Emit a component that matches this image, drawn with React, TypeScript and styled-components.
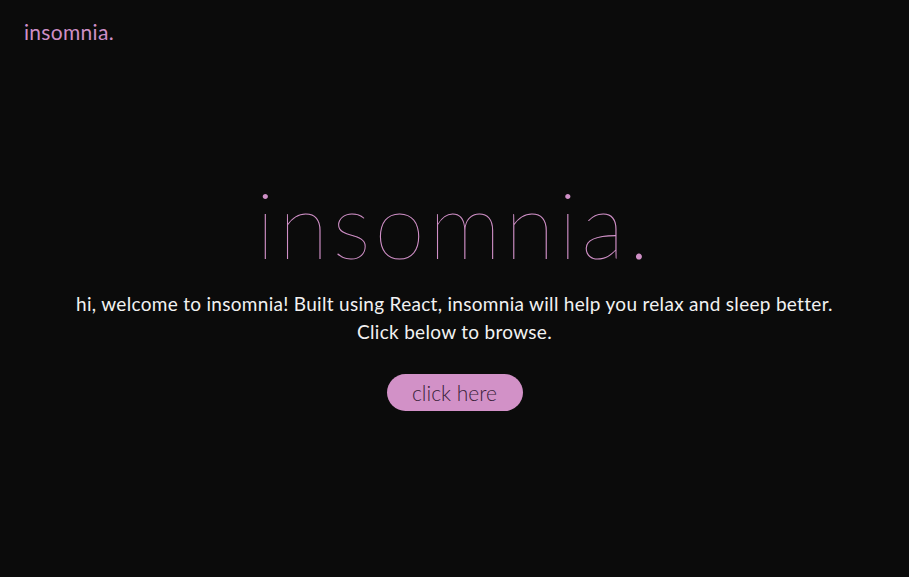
import React from 'react'
import styled, { createGlobalStyle } from 'styled-components'

const Global = createGlobalStyle`
  html, body {
    margin: 0;
    padding: 0;
    background-color: #0b0b0b;
    font-family: "Lato", "Open Sans", sans-serif;
  }
`

const App = () => {
  return (
    <>
      <Global />
      <Page>
        <Header>
          <Logo>insomnia.</Logo>
        </Header>
        <Hero>
          <Title>insomnia.</Title>
          <Intro>
            hi, welcome to insomnia! Built using React, insomnia will help you relax and sleep better.
            <br />
            Click below to browse.
          </Intro>
          <Button>click here</Button>
        </Hero>
      </Page>
    </>
  )
}

export default App

const Page = styled.div`
  width: 100%;
  height: 577px;
  background-color: #0b0b0b;
  display: flex;
  flex-direction: column;
`
const Header = styled.div`
  display: flex;
  align-items: center;
  height: 62px;
  padding-left: 24px;
`
const Logo = styled.div`
  color: #cf8fc6;
  font-size: 21px;
  font-weight: 400;
  letter-spacing: 0.3px;
`
const Hero = styled.div`
  display: flex;
  flex-direction: column;
  align-items: center;
  padding-top: 112px;
`
const Title = styled.h1`
  margin: 0;
  color: #cf8fc6;
  font-size: 92px;
  font-weight: 100;
  line-height: 100px;
  letter-spacing: 3.6px;
`
const Intro = styled.p`
  margin: 16px 0 0;
  color: #f2f2f2;
  font-size: 19px;
  line-height: 28px;
  letter-spacing: 0.3px;
  text-align: center;
`
const Button = styled.div`
  margin-top: 28px;
  width: 136px;
  height: 37px;
  border-radius: 20px;
  background-color: #d291c7;
  color: #3a1f3a;
  font-size: 21px;
  font-weight: 300;
  display: flex;
  justify-content: center;
  align-items: center;
  cursor: pointer;
`
